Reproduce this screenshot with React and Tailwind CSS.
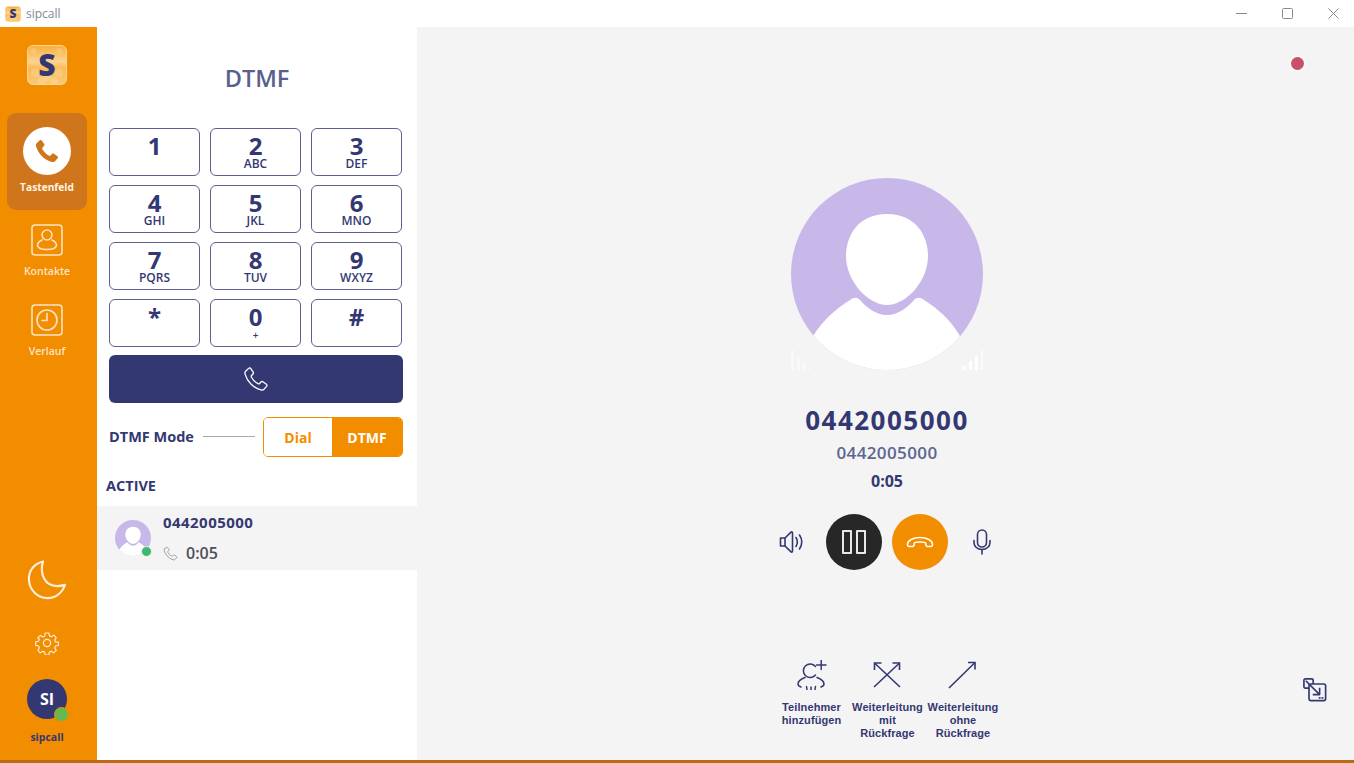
import React from "react";

const navy = "#343872";
const phonePath = "M2.6 4.6 L5.2 2.2 C5.9 1.6 6.7 1.7 7.2 2.4 L9.4 5.6 C9.8 6.2 9.7 6.9 9.2 7.4 L7.9 8.7 C7.5 9.1 7.5 9.6 7.7 10.1 C9 12.6 11.3 15 13.9 16.3 C14.4 16.5 14.9 16.5 15.3 16.1 L16.6 14.8 C17.1 14.3 17.8 14.2 18.4 14.6 L21.6 16.8 C22.3 17.3 22.4 18.1 21.8 18.8 L19.4 21.4 C18.6 22.2 17.6 22.4 16.5 22.1 C9.6 20.2 3.8 14.4 1.9 7.5 C1.6 6.4 1.8 5.4 2.6 4.6 Z";

function PhoneIcon({ className, color = "currentColor", sw = 1.5 }) {
  return (
    <svg viewBox="0 0 24 24" fill="none" stroke={color} strokeWidth={sw} strokeLinecap="round" strokeLinejoin="round" className={className}>
      <path d={phonePath} />
    </svg>
  );
}

function Logo({ size, font, radius }) {
  return (
    <div
      className="relative flex items-center justify-center overflow-hidden border border-[#fbd596] bg-[linear-gradient(180deg,#f8b040_0%,#fdd490_42%,#f9bb55_58%,#fbc878_100%)]"
      style={{ width: size, height: size, borderRadius: radius }}
    >
      <svg className="absolute inset-0 h-full w-full" viewBox="0 0 40 40" fill="#fff" fillOpacity="0.16">
        <circle cx="8" cy="28" r="5" />
        <circle cx="20" cy="32" r="5" />
        <circle cx="32" cy="28" r="5" />
        <circle cx="14" cy="37" r="4" />
        <circle cx="28" cy="37" r="4" />
        <circle cx="33" cy="5" r="3" />
        <circle cx="6" cy="5" r="3" />
      </svg>
      <span className="relative font-extrabold leading-none text-[#343872]" style={{ fontSize: font, fontFamily: '"Open Sans", sans-serif' }}>S</span>
    </div>
  );
}

function Avatar({ size }) {
  return (
    <svg viewBox="0 0 192 192" style={{ width: size, height: size }} className="block">
      <defs>
        <clipPath id={`c${size}`}><circle cx="96" cy="96" r="96" /></clipPath>
      </defs>
      <circle cx="96" cy="96" r="96" fill="#c8b8ea" />
      <g clipPath={`url(#c${size})`}>
        <path d="M96 36 C125 36 137 58 137 78 C137 103 115 127 96 127 C77 127 55 103 55 78 C55 58 67 36 96 36 Z" fill="#fff" />
        <path d="M22 158 C32 142 46 130 59 122 C63 119 66 119 69 122 C76 130 85 137 96 137 C107 137 116 130 123 122 C126 119 129 119 133 122 C146 130 160 142 169 158 L169 192 L22 192 Z" fill="#fff" />
      </g>
    </svg>
  );
}

function Key({ d, s, small }) {
  return (
    <button className="flex h-12 w-[91px] flex-col items-center rounded-[6px] border border-[#5d6090] bg-white pt-[7px] text-[#343872]">
      <span className="text-[24px] font-bold leading-[20px]">{d}</span>
      {s && <span className={small ? "mt-[2px] text-[10px] font-semibold leading-[12px]" : "mt-[2px] text-[12px] font-semibold leading-[12px]"}>{s}</span>}
    </button>
  );
}

function NavItem({ label, children }) {
  return (
    <div className="flex flex-col items-center">
      {children}
      <span className="mt-[8px] text-[10.5px] font-semibold leading-[14px] text-[#fbe3c3]">{label}</span>
    </div>
  );
}

function ActionLabel({ lines }) {
  return (
    <div className="mt-[11px] whitespace-nowrap text-center text-[11px] font-bold leading-[13px] tracking-[0.1px] text-[#343872]" style={{ fontFamily: '"Liberation Sans", sans-serif' }}>
      {lines.map((l) => <div key={l}>{l}</div>)}
    </div>
  );
}

export default function App() {
  return (
    <div className="flex h-[763px] w-[1354px] flex-col overflow-hidden bg-white" style={{ fontFamily: '"Open Sans", sans-serif' }}>
      {/* title bar */}
      <div className="flex h-[27px] shrink-0 items-center bg-white pl-[5px]">
        <Logo size={16} font={12} radius={3} />
        <span className="ml-[5px] text-[12px] text-[#858993]">sipcall</span>
        <div className="ml-auto flex items-center gap-[35px] pr-[15px] text-[#8a8a8a]">
          <svg width="11" height="11" viewBox="0 0 11 11" stroke="currentColor" fill="none"><path d="M0 5.5H11" /></svg>
          <svg width="11" height="11" viewBox="0 0 11 11" stroke="currentColor" fill="none"><rect x="0.5" y="0.5" width="10" height="10" rx="1" /></svg>
          <svg width="11" height="11" viewBox="0 0 11 11" stroke="currentColor" fill="none"><path d="M0.5 0.5L10.5 10.5M10.5 0.5L0.5 10.5" /></svg>
        </div>
      </div>

      <div className="flex min-h-0 flex-1">
        {/* sidebar */}
        <aside className="flex w-[97px] shrink-0 flex-col items-center bg-[#f38d00] pr-[3px] pt-[18px]">
          <Logo size={40} font={30} radius={6} />
          <div className="mt-[28px] flex h-[97px] w-[80px] flex-col items-center rounded-[9px] bg-[#cf751b] pt-[14px]">
            <div className="flex h-12 w-12 items-center justify-center rounded-full bg-white">
              <svg viewBox="0 0 24 24" className="h-[26px] w-[26px]" fill="#cf751b">
                <path d={phonePath} />
              </svg>
            </div>
            <span className="mt-[5px] text-[10.2px] font-bold leading-[14px] text-[#fff3e3]">Tastenfeld</span>
          </div>
          <div className="mt-[14px]">
            <NavItem label="Kontakte">
              <svg width="32" height="32" viewBox="0 0 32 32" fill="none" stroke="#fbe3c3" strokeWidth="1.6" strokeLinecap="round">
                <rect x="1" y="1" width="30" height="30" rx="3" />
                <circle cx="16" cy="11" r="5" />
                <path d="M11 16C8 17.5 6.5 19.5 6.5 21 C6.5 24 11 25.5 16 25.5 C21 25.5 25.5 24 25.5 21 C25.5 19.5 24 17.5 21 16" />
              </svg>
            </NavItem>
          </div>
          <div className="mt-[26px]">
            <NavItem label="Verlauf">
              <svg width="32" height="32" viewBox="0 0 32 32" fill="none" stroke="#fbe3c3" strokeWidth="1.6" strokeLinecap="round">
                <rect x="1" y="1" width="30" height="30" rx="3" />
                <circle cx="16" cy="16" r="10" />
                <path d="M16 9.5V16.5H11" />
              </svg>
            </NavItem>
          </div>

          <div className="mt-auto flex flex-col items-center pb-[15px]">
            <svg width="41" height="42" viewBox="0 0 42 42" fill="none" stroke="#fbeedd" strokeWidth="2.2" strokeLinejoin="round">
              <path d="M16.5 2 C6 4.5 1.5 13 2 21 C2.5 31 10.5 39.5 21 39.5 C29.5 39.5 36 34 39 26 C28 29 21 26 17.5 19.5 C15 14.5 14.5 8 16.5 2 Z" />
            </svg>
            <svg className="mt-[30px]" width="24" height="24" viewBox="0 0 24 24" fill="none" stroke="#fbeedd" strokeWidth="1.2" strokeLinejoin="round">
              <path d="M10 1.5h4l.6 3 2 .9 2.6-1.7 2.6 2.8-1.7 2.5.9 2 3-.0v3.6l-3 .6-.9 2 1.7 2.6-2.8 2.6-2.5-1.7-2 .9-.6 3h-3.8l-.6-3-2-.9-2.6 1.7-2.6-2.8 1.7-2.5-.9-2-3-.6v-3.8l3-.6.9-2L2.3 6.7 5 4l2.5 1.7 2-.9z" transform="translate(0.6 0.6) scale(0.95)" />
              <circle cx="12" cy="12" r="3.6" />
            </svg>
            <div className="relative mt-[24px] flex h-10 w-10 items-center justify-center rounded-full bg-[#343872]">
              <span className="text-[16px] font-bold text-white">SI</span>
              <span className="absolute bottom-[-3px] right-[-2px] h-[15px] w-[15px] rounded-full border border-[#f38d00] bg-[#66b94f]"></span>
            </div>
            <span className="mt-[11px] text-[10.5px] font-bold leading-[15px] text-[#343872]">sipcall</span>
          </div>
        </aside>

        {/* dial panel */}
        <section className="flex w-[320px] shrink-0 flex-col bg-white">
          <h1 className="pt-[35px] text-center text-[23.5px] font-semibold leading-[32px] text-[#5a5f8c]">DTMF</h1>
          <div className="mt-[34px] flex flex-wrap gap-x-[10px] gap-y-[9px] pl-[12px]">
            <Key d="1" />
            <Key d="2" s="ABC" />
            <Key d="3" s="DEF" />
            <Key d="4" s="GHI" />
            <Key d="5" s="JKL" />
            <Key d="6" s="MNO" />
            <Key d="7" s="PQRS" />
            <Key d="8" s="TUV" />
            <Key d="9" s="WXYZ" />
            <Key d="*" />
            <Key d="0" s="+" small />
            <Key d="#" />
          </div>
          <button className="ml-[12px] mt-[8px] flex h-12 w-[294px] items-center justify-center rounded-[6px] bg-[#343872]">
            <PhoneIcon className="h-[26px] w-[26px]" color="#fff" sw={1.2} />
          </button>
          <div className="ml-[12px] mt-[14px] flex h-10 w-[294px] items-center">
            <span className="text-[14.5px] font-bold text-[#343872]">DTMF Mode</span>
            <span className="ml-[9px] h-px w-[52px] -translate-y-px bg-[#a9a9a9]"></span>
            <div className="ml-auto flex h-10 w-[140px] overflow-hidden rounded-[5px] border border-[#f38d00] text-[14px] font-bold">
              <span className="flex w-[68px] items-center justify-center bg-white text-[#f38d00]">Dial</span>
              <span className="flex flex-1 items-center justify-center bg-[#f38d00] text-white">DTMF</span>
            </div>
          </div>
          <div className="ml-[9px] mt-[19px] text-[14.5px] font-bold leading-[20px] text-[#343872]">ACTIVE</div>
          <div className="mt-[10px] flex h-16 bg-[#f4f4f4] pl-[18px]">
            <div className="relative mt-[14px] h-9 w-9">
              <Avatar size={36} />
              <span className="absolute bottom-[-1px] right-[-1px] h-[11px] w-[11px] rounded-full border border-[#f4f4f4] bg-[#3dba6f]"></span>
            </div>
            <div className="ml-[12px] flex flex-col">
              <span className="mt-[6px] text-[15px] font-bold leading-[20px] tracking-[0.45px] text-[#343872]">0442005000</span>
              <div className="mt-[11px] flex items-center">
                <PhoneIcon className="h-[15px] w-[15px]" color="#8b8b8b" sw={1.3} />
                <span className="ml-[8px] text-[16px] font-semibold leading-[20px] text-[#4f4f5a]">0:05</span>
              </div>
            </div>
          </div>
        </section>

        {/* call view */}
        <main className="relative flex min-w-0 flex-1 flex-col items-center bg-[#f4f4f4] pl-[3px]">
          <span className="absolute left-[874px] top-[30px] h-[13px] w-[13px] rounded-full bg-[#c8506a] ring-2 ring-[#f8f8f8]"></span>

          <div className="relative mt-[151px] h-[192px] w-[192px]">
            <Avatar size={192} />
            <svg className="absolute bottom-0 left-0" width="192" height="24" viewBox="0 0 192 24" fill="#fbfbfb">
              <rect x="0" y="4" width="3" height="20" opacity="0.6" />
              <rect x="6" y="12" width="3" height="12" opacity="0.6" />
              <rect x="12" y="17" width="3" height="7" opacity="0.6" />
              <rect x="17" y="21" width="2" height="3" opacity="0.6" />
              <rect x="172" y="20" width="3" height="4" fill="#fff" />
              <rect x="178" y="15" width="3" height="9" fill="#fff" />
              <rect x="184" y="10" width="3" height="14" fill="#fff" />
              <rect x="190" y="4" width="2" height="20" />
            </svg>
          </div>

          <div className="mt-[32px] text-[26px] font-bold leading-[36px] tracking-[1.5px] text-[#343872]">0442005000</div>
          <div className="mt-[3px] text-[17px] font-semibold leading-[24px] tracking-[0.4px] text-[#5b6690]">0442005000</div>
          <div className="mt-[5px] text-[16px] font-bold leading-[22px] text-[#343872]">0:05</div>

          <div className="mr-[2px] mt-[22px] flex items-center">
            <svg className="mr-[21px]" width="26" height="26" viewBox="0 0 26 26" fill="none" stroke={navy} strokeWidth="1.6" strokeLinejoin="round" strokeLinecap="round">
              <path d="M1.5 9H6L12 3.2C12.8 2.6 13.5 3 13.5 4V22C13.5 23 12.8 23.4 12 22.8L6 17H1.5Z" />
              <path d="M6 9V17" />
              <path d="M17 8.5C18.5 11 18.5 15 17 17.5" />
              <path d="M20.5 6C23.5 10 23.5 16 20.5 20" />
            </svg>
            <div className="flex h-14 w-14 items-center justify-center gap-[4px] rounded-full bg-[#272727]">
              <span className="h-[24px] w-[10px] rounded-[1px] border-2 border-[#e8e8e8]"></span>
              <span className="h-[24px] w-[10px] rounded-[1px] border-2 border-[#e8e8e8]"></span>
            </div>
            <div className="ml-[10px] flex h-14 w-14 items-center justify-center rounded-full bg-[#f38d00]">
              <svg width="28" height="12" viewBox="0 0 28 12" fill="none" stroke="#fff" strokeWidth="1.5" strokeLinejoin="round">
                <path d="M1.5 8.5C1.5 4.5 7 1.5 14 1.5C21 1.5 26.5 4.5 26.5 8.5C26.5 9.8 25.6 10.5 24.6 10.5H21.5C20.3 10.5 19.8 9.8 19.8 8.8V7.6C19.8 6.8 17.5 6 14 6C10.5 6 8.2 6.8 8.2 7.6V8.8C8.2 9.8 7.7 10.5 6.5 10.5H3.4C2.4 10.5 1.5 9.8 1.5 8.5Z" />
              </svg>
            </div>
            <svg className="ml-[22px]" width="24" height="26" viewBox="0 0 24 26" fill="none" stroke={navy} strokeWidth="1.6" strokeLinecap="round">
              <rect x="7.5" y="1" width="9" height="17" rx="4.5" />
              <path d="M4 11.5V13.5C4 17.5 7.5 20.5 12 20.5C16.5 20.5 20 17.5 20 13.5V11.5" />
              <path d="M12 20.5V25" />
            </svg>
          </div>

          <div className="mt-[90px] flex items-start">
            <div className="flex w-[76px] flex-col items-center">
              <svg width="30" height="30" viewBox="0 0 30 30" fill="none" stroke={navy} strokeWidth="1.5" strokeLinecap="round">
                <path d="M21 6.5A6.8 6.8 0 1 0 21 15" transform="translate(-2.5 0)" />
                <path d="M19.5 5H29M24.2 0.5V9.5" />
                <path d="M8 17.5C4 19 1 21.5 1 24C1 25.5 2.5 26.5 4 27" />
                <path d="M20 17.5C24 19 27 21.5 27 24C27 25.5 25.5 26.5 24 27" />
                <path d="M9.5 26.5L10 29.5M14 27V29.5M18.5 26.5L18 29.5" />
              </svg>
              <ActionLabel lines={["Teilnehmer", "hinzufügen"]} />
            </div>
            <div className="flex w-[76px] flex-col items-center">
              <svg className="-translate-x-px" width="30" height="30" viewBox="0 0 30 30" fill="none" stroke={navy} strokeWidth="1.6">
                <path d="M2.5 3L28 27M27.5 3L2 27" />
                <path d="M2.5 10V3H9.5M20.5 3H27.5V10" />
              </svg>
              <ActionLabel lines={["Weiterleitung", "mit", "Rückfrage"]} />
            </div>
            <div className="flex w-[75px] flex-col items-center">
              <svg className="-translate-x-px" width="30" height="30" viewBox="0 0 30 30" fill="none" stroke={navy} strokeWidth="1.6">
                <path d="M2 28L28 2.5" />
                <path d="M21 2.5H28V9.5" />
              </svg>
              <ActionLabel lines={["Weiterleitung", "ohne", "Rückfrage"]} />
            </div>
          </div>

          <svg className="absolute left-[886px] top-[651px]" width="24" height="24" viewBox="0 0 26 26" fill="none" stroke={navy} strokeWidth="1.8" strokeLinejoin="round">
            <rect x="1" y="1" width="10" height="10" rx="1.5" />
            <rect x="6.5" y="6.5" width="18" height="18" rx="2" fill="#f4f4f4" />
            <path d="M3 3L18 18M18 10.5V18H10.5" />
            <path d="M17 21.5H22" strokeDasharray="2 1" />
          </svg>
        </main>
      </div>
      <div className="h-[3px] shrink-0 bg-[#b76c0e]"></div>
    </div>
  );
}
